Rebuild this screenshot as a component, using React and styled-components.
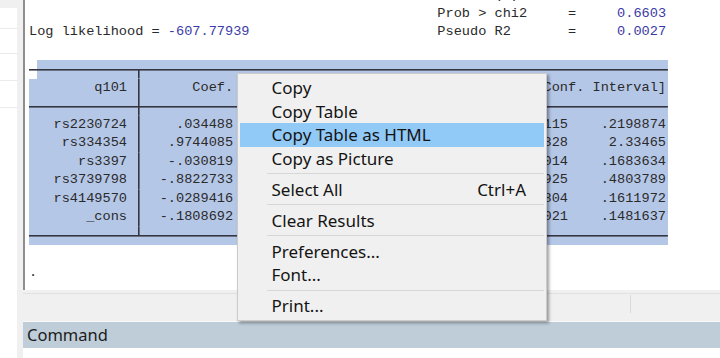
import React from 'react';
import styled, { createGlobalStyle } from 'styled-components';

const GlobalStyle = createGlobalStyle`
  *, *::before, *::after { box-sizing: border-box; }
  html, body { margin: 0; padding: 0; background: #fff; }
  body { width: 720px; height: 358px; overflow: hidden; font-family: "Noto Sans", sans-serif; }
`;

const Page = styled.div`
  position: relative;
  display: flex;
  width: 720px;
  height: 358px;
  overflow: hidden;
  background: #fff;
`;

const SidePanel = styled.div`
  width: 17px;
  display: flex;
  flex-direction: column;
  background: #fff;
`;
const SideHead = styled.div`
  height: 8px;
  background: #f0f0f0;
`;
const SideRow = styled.div`
  height: ${p => p.$h}px;
  border-bottom: 1px solid #ebebeb;
`;
const Gutter = styled.div`
  width: 6px;
  background: #f0f0f0;
`;
const Main = styled.div`
  flex: 1;
  min-width: 0;
  display: flex;
  flex-direction: column;
`;

const Results = styled.div`
  height: 290px;
  border-left: 2px solid #8e8e8e;
  padding-left: 4px;
  overflow: hidden;
  background: #fff;
  font-family: "Liberation Mono", monospace;
  font-size: 13.62px;
  color: #2a2a2a;
`;
const Scroller = styled.div`
  margin-top: -13.75px;
`;
const Line = styled.div`
  height: 18.5px;
  line-height: 18.5px;
  white-space: pre;
`;
const Num = styled.span`
  color: #3b3ba6;
`;

const Selection = styled.div`
  width: calc(78ch + 2px);
  background: #b5c7e7;
`;
const Row = styled.div`
  display: flex;
  height: 18.5px;
  line-height: 18.5px;
  white-space: pre;
`;
const Label = styled.span`
  width: 12ch;
  text-align: right;
`;
const Cell = styled.span`
  width: 1ch;
`;
const Rest = styled.span`
  flex: 1;
`;
const INK = '#35353f';
const Divider = styled.span`
  width: 1ch;
  background: linear-gradient(${INK}, ${INK}) no-repeat center / 1.6px 100%;
`;
const RuleSeg = styled.span`
  width: ${p => p.$w || 'auto'};
  flex: ${p => (p.$grow ? 1 : 'none')};
  background: linear-gradient(${INK}, ${INK}) no-repeat center / 100% 1.6px
    ${p => (p.$notch ? ', #fff' : '')};
`;
const Junction = styled.span`
  width: 1ch;
  background:
    linear-gradient(${INK}, ${INK}) no-repeat center / 100% 1.6px,
    linear-gradient(${INK}, ${INK}) no-repeat center ${p => p.$pos} / 1.6px ${p => p.$len};
`;

const StatusBar = styled.div`
  height: 32px;
  padding: 3px 0 4px;
  background: #f0f0f0;
  border-bottom: 1px solid #f9f9f9;
`;
const StatusInner = styled.div`
  display: flex;
  height: 100%;
  border-top: 1px solid #e1e1e1;
`;
const StatusCell = styled.div`
  flex: ${p => (p.$w ? 'none' : 1)};
  width: ${p => (p.$w ? p.$w + 'px' : 'auto')};
  margin: 1px 0 4px;
  border-left: ${p => (p.$w ? '1px solid #d9d9d9' : 'none')};
`;

const CommandBar = styled.div`
  height: 26px;
  line-height: 26px;
  padding-left: 4px;
  background: #bfcdd9;
  color: #1c1c1c;
  font-family: "Noto Sans", sans-serif;
  font-size: 16.5px;
`;

const Menu = styled.div`
  position: absolute;
  left: 237px;
  top: 73px;
  width: 310px;
  padding: 2px;
  background: #f0f0f0;
  border: 1px solid #cbcbcb;
  box-shadow: 2px 2px 3px rgba(0, 0, 0, 0.38);
  font-family: "Noto Sans", sans-serif;
  font-size: 17px;
  color: #141414;
`;
const MenuItem = styled.div`
  display: flex;
  align-items: center;
  justify-content: space-between;
  height: 23.5px;
  padding: 0 18px 0 31.5px;
  background: ${p => (p.$active ? '#91c9f7' : 'transparent')};
  white-space: nowrap;
`;
const Separator = styled.div`
  height: 7.5px;
  margin-left: 27px;
  background: linear-gradient(#d7d7d7, #d7d7d7) no-repeat 0 3px / 100% 1px;
`;

const pad = (s, n) => s.padEnd(n, ' ');
const lpad = (s, n) => s.padStart(n, ' ');

const rows = [
  ['rs2230724', '.034488', '.0945935', '0.36', '0.715', '-.1509115', '.2198874'],
  ['rs334354', '.9744085', '.6940147', '1.40', '0.160', '-.3858328', '2.33465'],
  ['rs3397', '-.030819', '.1016259', '-0.30', '0.762', '-.2300014', '.1683634'],
  ['rs3739798', '-.8822733', '.6952446', '-1.27', '0.204', '-2.244925', '.4803789'],
  ['rs4149570', '-.0289416', '.0970117', '-0.30', '0.765', '-.2190804', '.1611972'],
  ['_cons', '-.1808692', '.1678774', '-1.08', '0.281', '-.5099021', '.1481637'],
];

const StatLine = ({ name, value }) => (
  <Line>
    {pad('', 50)}
    {pad(name, 16)}={' '}
    <Num>{lpad(value, 10)}</Num>
  </Line>
);

const menuItems = [
  { t: 'Copy' },
  { t: 'Copy Table' },
  { t: 'Copy Table as HTML', active: true },
  { t: 'Copy as Picture' },
  { sep: true },
  { t: 'Select All', k: 'Ctrl+A' },
  { sep: true },
  { t: 'Clear Results' },
  { sep: true },
  { t: 'Preferences...' },
  { t: 'Font...' },
  { sep: true },
  { t: 'Print...' },
];

export default function App() {
  return (
    <Page>
      <GlobalStyle />
      <SidePanel>
        <SideHead />
        <SideRow $h={21} />
        <SideRow $h={25} />
        <SideRow $h={27} />
        <SideRow $h={27} />
      </SidePanel>
      <Gutter />
      <Main>
        <Results>
          <Scroller>
            <StatLine name="LR chi2(6)" value="4.11" />
            <StatLine name="Prob > chi2" value="0.6603" />
            <Line>
              {'Log likelihood = '}
              <Num>-607.77939</Num>
              {pad('', 23)}
              {pad('Pseudo R2', 16)}={' '}
              <Num>{lpad('0.0027', 10)}</Num>
            </Line>
            <Line> </Line>
            <Selection>
              <Row>
                <RuleSeg $w="1ch" $notch />
                <RuleSeg $w="12ch" />
                <Junction $pos="bottom" $len="50%" />
                <RuleSeg $grow />
              </Row>
              <Row>
                <Label>q101</Label>
                <Cell> </Cell>
                <Divider />
                <Rest>{'      Coef.   Std. Err.      z    P>|z|     [95% Conf. Interval]'}</Rest>
              </Row>
              <Row>
                <RuleSeg $w="13ch" />
                <Junction $pos="center" $len="100%" />
                <RuleSeg $grow />
              </Row>
              {rows.map(r => (
                <Row key={r[0]}>
                  <Label>{r[0]}</Label>
                  <Cell> </Cell>
                  <Divider />
                  <Rest>
                    {lpad(r[1], 11) + lpad(r[2], 11) + lpad(r[3], 9) + lpad(r[4], 8) + lpad(r[5], 13) + lpad(r[6], 12)}
                  </Rest>
                </Row>
              ))}
              <Row>
                <RuleSeg $w="13ch" />
                <Junction $pos="top" $len="50%" />
                <RuleSeg $grow />
              </Row>
            </Selection>
            <Line> </Line>
            <Line>.</Line>
          </Scroller>
        </Results>
        <StatusBar>
          <StatusInner>
            <StatusCell />
            <StatusCell $w={90} />
          </StatusInner>
        </StatusBar>
        <CommandBar>Command</CommandBar>
      </Main>
      <Menu>
        {menuItems.map((m, i) =>
          m.sep ? (
            <Separator key={i} />
          ) : (
            <MenuItem key={i} $active={m.active}>
              <span>{m.t}</span>
              {m.k && <span>{m.k}</span>}
            </MenuItem>
          )
        )}
      </Menu>
    </Page>
  );
}
